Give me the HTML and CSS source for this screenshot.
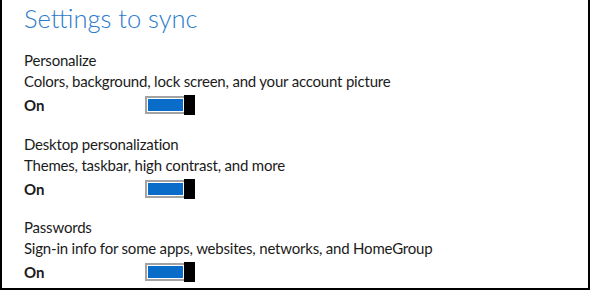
FILE: index.html
```html
<!DOCTYPE html>
<html lang="en">
<head>
  <meta charset="UTF-8" />
  <title>Settings to sync</title>
  <link rel="stylesheet" href="styles.css">
</head>
<body>
  <div class="panel">
    <h1 class="title">Settings to sync</h1>

    <div class="setting">
      <div class="name">Personalize</div>
      <div class="desc">Colors, background, lock screen, and your account picture</div>
      <div class="state">
        <span class="state-label">On</span>
        <div class="switch"><div class="track"></div><div class="thumb"></div></div>
      </div>
    </div>

    <div class="setting">
      <div class="name">Desktop personalization</div>
      <div class="desc">Themes, taskbar, high contrast, and more</div>
      <div class="state">
        <span class="state-label">On</span>
        <div class="switch"><div class="track"></div><div class="thumb"></div></div>
      </div>
    </div>

    <div class="setting">
      <div class="name">Passwords</div>
      <div class="desc">Sign-in info for some apps, websites, networks, and HomeGroup</div>
      <div class="state">
        <span class="state-label">On</span>
        <div class="switch"><div class="track"></div><div class="thumb"></div></div>
      </div>
    </div>
  </div>
</body>
</html>
```

FILE: styles.css
```css
* { box-sizing: border-box; }
body {
  margin: 0;
  background: #fff;
  font-family: 'Lato', 'Noto Sans', sans-serif;
  color: #1b1b1b;
}
.panel {
  width: 590px;
  height: 290px;
  border: 2px solid #000;
  border-top: 0;
  padding: 3px 0 0 22px;
  overflow: hidden;
}
.title {
  margin: 0 0 17px;
  font-size: 25.5px;
  line-height: 30px;
  font-weight: 300;
  color: #2a7bcb;
}
.setting {
  display: flex;
  flex-direction: column;
  margin-bottom: 18.5px;
}
.name,
.desc {
  font-size: 15px;
  line-height: 21px;
  letter-spacing: -0.2px;
}
.state {
  display: flex;
  align-items: center;
  margin-top: 3px;
  height: 20px;
}
.state-label {
  width: 121px;
  font-size: 15px;
  font-weight: bold;
}
.switch {
  display: flex;
  align-items: center;
}
.track {
  width: 39px;
  height: 18px;
  border: 2px solid #a3a3a3;
  border-right: 0;
  padding: 1px;
  background: #0a6cc9;
  background-clip: content-box;
}
.thumb {
  width: 11px;
  height: 20px;
  background: #000;
}
```
